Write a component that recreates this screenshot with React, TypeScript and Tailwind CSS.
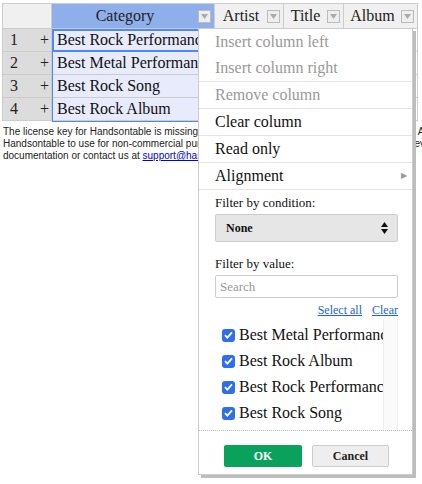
import React from "react";

const serif = { fontFamily: '"Liberation Serif", "Times New Roman", serif' };
const sans = { fontFamily: '"Liberation Sans", Arial, sans-serif' };

const categories = ["Best Rock Performance", "Best Metal Performance", "Best Rock Song", "Best Rock Album"];
const filterValues = ["Best Metal Performance", "Best Rock Album", "Best Rock Performance", "Best Rock Song"];

function DropButton() {
  return (
    <span className="mr-[3px] flex h-[13px] w-[13px] shrink-0 items-center justify-center border border-[#bbb] bg-[#eeeeee]">
      <svg width="7" height="5" viewBox="0 0 7 5">
        <path d="M0 0h7L3.5 5z" fill="#aaa" />
      </svg>
    </span>
  );
}

function HeaderCell({ label, width, active }: { label: string; width: string; active?: boolean }) {
  return (
    <div
      className={`${width} flex h-[26px] items-center border-r border-t border-b border-[#ccc] ${
        active ? "bg-[#8eafe9]" : "bg-[#f0f0f0]"
      }`}
    >
      <span className="flex-1 text-center text-[16px] leading-none text-[#222]">{label}</span>
      <DropButton />
    </div>
  );
}

function Check() {
  return (
    <span className="flex h-[13px] w-[13px] shrink-0 items-center justify-center rounded-[3px] bg-[#2f6fec]">
      <svg width="9" height="8" viewBox="0 0 9 8">
        <path d="M1 4.2l2.3 2.4L8 1.3" stroke="#fff" strokeWidth="1.8" fill="none" />
      </svg>
    </span>
  );
}

function MenuItem({ label, disabled, arrow }: { label: string; disabled?: boolean; arrow?: boolean }) {
  return (
    <div className={`flex h-[26px] items-center pl-[16px] pr-[5px] text-[16px] ${disabled ? "text-[#999]" : "text-[#111]"}`}>
      <span className="flex-1">{label}</span>
      {arrow && <span className="text-[8px] text-[#999]">▶</span>}
    </div>
  );
}

function Sep() {
  return <div className="h-px bg-[#e4e4e4]" />;
}

export default function App() {
  return (
    <div className="relative h-[484px] w-[422px] overflow-hidden bg-white" style={serif}>
      <div className="pl-[2px] pt-[3px]">
        {/* grid */}
        <div className="relative w-[640px]">
          <div className="flex">
            <div className="h-[26px] w-[50px] border border-[#ccc] bg-[#f0f0f0]" />
            <HeaderCell label="Category" width="w-[163px]" active />
            <HeaderCell label="Artist" width="w-[69px]" />
            <HeaderCell label="Title" width="w-[60px]" />
            <HeaderCell label="Album" width="w-[74px]" />
          </div>
          {categories.map((c, i) => (
            <div key={c} className="flex">
              <div className="flex h-[23px] w-[50px] items-center justify-between border-x border-b border-[#ccc] bg-[#dcdcdc] pl-[7px] pr-[2px] text-[16px] text-[#222]">
                <span>{i + 1}</span>
                <span>+</span>
              </div>
              <div className="flex h-[23px] w-[163px] items-center overflow-hidden whitespace-nowrap border-r border-b border-[#ccc] bg-[#e8ebfc] pl-[5px] text-[16px] text-[#111]">
                {c}
              </div>
              <div className="h-[23px] w-[69px] border-r border-b border-[#ccc] bg-white" />
              <div className="h-[23px] w-[60px] border-r border-b border-[#ccc] bg-white" />
              <div className="h-[23px] w-[74px] border-r border-b border-[#ccc] bg-white" />
            </div>
          ))}
          {/* selection overlays */}
          <div className="pointer-events-none absolute left-[50px] top-[26px] h-[93px] w-[163px] border border-[#4b89ff]" />
          <div className="pointer-events-none absolute left-[50px] top-[26px] h-[23px] w-[163px] border-2 border-[#4b89ff]" />
        </div>

        {/* license notice */}
        <div className="mt-[5px] pl-px text-[10px] leading-[12px] text-[#222]" style={sans}>
          <div className="whitespace-nowrap">
            The license key for Handsontable is missing. Use your purchased key to activate the product. Alternatively, you can activate
          </div>
          <div className="whitespace-nowrap">
            Handsontable to use for non-commercial purposes by passing the key: 'non-commercial-and-evaluation'. Read more about it in the
          </div>
          <div className="whitespace-nowrap">
            documentation or contact us at{" "}
            <a href="#" className="text-[#0000ee] underline">
              support@handsontable.com
            </a>
            .
          </div>
        </div>
      </div>

      {/* column dropdown menu */}
      <div className="absolute left-[198px] top-[28px] w-[215px] border border-[#ccc] bg-white pb-[7px] shadow-[3px_3px_0_0_#bdbdbd]">
        <MenuItem label="Insert column left" disabled />
        <MenuItem label="Insert column right" disabled />
        <Sep />
        <MenuItem label="Remove column" disabled />
        <Sep />
        <MenuItem label="Clear column" />
        <Sep />
        <MenuItem label="Read only" />
        <Sep />
        <MenuItem label="Alignment" arrow />
        <Sep />

        <div className="pl-[16px] pr-[14px]">
          <div className="mt-[5px] text-[13px] leading-[16px] text-[#111]">Filter by condition:</div>
          <div className="mt-[3px] flex h-[28px] items-center justify-between rounded-[2px] border border-[#ccc] bg-[#e6e6e6] pl-[10px] pr-[9px]">
            <span className="text-[12px] font-bold text-[#111]">None</span>
            <svg width="7" height="12" viewBox="0 0 7 12">
              <path d="M3.5 0L7 5H0z M0 7h7L3.5 12z" fill="#111" />
            </svg>
          </div>
          <div className="mt-[14px] text-[13px] leading-[16px] text-[#111]">Filter by value:</div>
          <input
            placeholder="Search"
            className="mt-[3px] block h-[23px] w-full rounded-[2px] border border-[#ccc] px-[4px] text-[13px] outline-none placeholder:text-[#999]"
            style={serif}
          />
          <div className="mt-[5px] flex justify-end gap-[10px] text-[12px] leading-[14px]">
            <a href="#" className="text-[#1d64d8] underline">Select all</a>
            <a href="#" className="text-[#1d64d8] underline">Clear</a>
          </div>
          <div className="mt-[3px] flex h-[110px]">
            <div className="min-w-0 flex-1 overflow-hidden pt-[2px]">
              {filterValues.map((v) => (
                <div key={v} className="flex h-[26px] items-center gap-[4px] whitespace-nowrap pl-[7px] text-[16px] text-[#111]">
                  <Check />
                  <span>{v}</span>
                </div>
              ))}
            </div>
            <div className="w-[15px] border-x border-[#eee] bg-[#fafafa]" />
          </div>
        </div>
        <div className="border-t border-dotted border-[#bbb]" />
        <div className="mt-[14px] flex gap-[10px] pl-[25px]">
          <button className="h-[22px] w-[78px] rounded-[2px] bg-[#0aa15d] text-[12px] font-bold text-white">OK</button>
          <button className="h-[22px] w-[77px] rounded-[2px] border border-[#ccc] bg-[#eeeeee] text-[12px] font-bold text-[#222]">
            Cancel
          </button>
        </div>
      </div>
    </div>
  );
}
